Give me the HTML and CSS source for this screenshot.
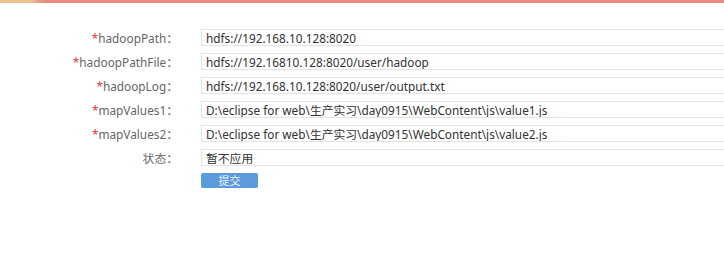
FILE: index.html
```html
<!DOCTYPE html>
<html lang="zh-CN">
<head>
    <meta charset="UTF-8">
    <title>hadoop 配置</title>
    <link rel="stylesheet" href="styles.css">
</head>
<body>
    <div class="top-bar"></div>

    <form class="config-form">
        <div class="form-row">
            <label class="form-label"><span class="req">*</span>hadoopPath：</label>
            <input class="form-input" type="text" value="hdfs://192.168.10.128:8020">
        </div>
        <div class="form-row">
            <label class="form-label"><span class="req">*</span>hadoopPathFile：</label>
            <input class="form-input" type="text" value="hdfs://192.16810.128:8020/user/hadoop">
        </div>
        <div class="form-row">
            <label class="form-label"><span class="req">*</span>hadoopLog：</label>
            <input class="form-input" type="text" value="hdfs://192.168.10.128:8020/user/output.txt">
        </div>
        <div class="form-row">
            <label class="form-label"><span class="req">*</span>mapValues1：</label>
            <input class="form-input" type="text" value="D:\eclipse for web\生产实习\day0915\WebContent\js\value1.js">
        </div>
        <div class="form-row">
            <label class="form-label"><span class="req">*</span>mapValues2：</label>
            <input class="form-input" type="text" value="D:\eclipse for web\生产实习\day0915\WebContent\js\value2.js">
        </div>
        <div class="form-row">
            <label class="form-label">状态：</label>
            <input class="form-input" type="text" value="暂不应用">
        </div>
        <div class="form-row">
            <span class="form-label"></span>
            <button class="submit-btn" type="submit">提交</button>
        </div>
    </form>
</body>
</html>
```

FILE: styles.css
```css
body {
    margin: 0;
    background: #fff;
    font-family: "Noto Sans", "Noto Sans CJK SC", sans-serif;
    font-size: 11.8px;
    color: #333;
    overflow: hidden;
}
.top-bar {
    height: 3px;
    background: linear-gradient(to right, #ebc391 0, #ebc391 30px, #e98b7d 44px, #e98b7d 100%);
}
.config-form {
    padding-top: 26px;
}
.form-row {
    display: flex;
    align-items: center;
    margin-bottom: 7px;
    white-space: nowrap;
}
.form-label {
    flex: 0 0 178px;
    text-align: right;
    color: #666;
    margin-right: 23px;
}
.req {
    color: #e0393e;
}
.form-input {
    flex: 1;
    min-width: 0;
    height: 17px;
    box-sizing: border-box;
    padding: 0 4px;
    border: 1px solid #e3e3e3;
    border-right: none;
    border-radius: 1px 0 0 1px;
    font-family: inherit;
    font-size: 11.8px;
    color: #333;
    outline: none;
}
.submit-btn {
    width: 57px;
    height: 15px;
    padding: 0;
    border: none;
    border-radius: 2px;
    background: #5b9bdc;
    color: #eaf2fb;
    font-family: inherit;
    font-size: 11px;
    line-height: 15px;
    cursor: pointer;
}
```
